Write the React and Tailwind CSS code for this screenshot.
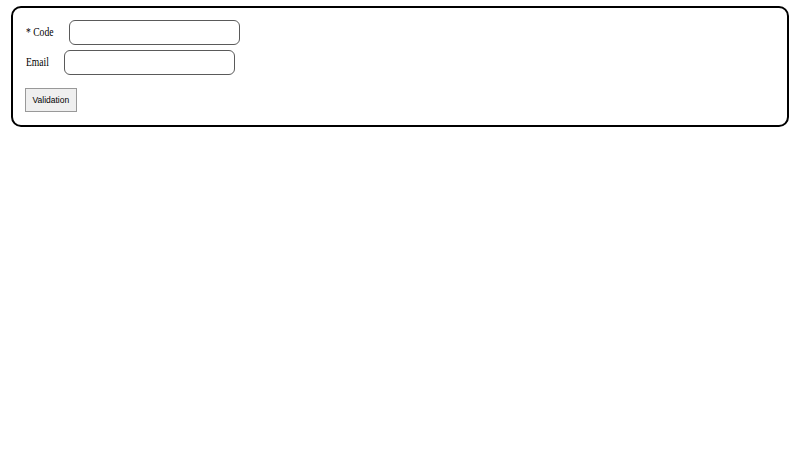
export default function App() {
  return (
    <div className="bg-white w-[800px] h-[450px] pt-[6px] px-[11px]">
      <div className="border-2 border-black rounded-[10px] px-[13px] pt-[11px] pb-[13px] flex flex-col">
        <div className="flex items-center h-[26px]">
          <span className="inline-block text-[12px] text-black mr-[9px] scale-x-80 origin-left" style={{ fontFamily: '"Liberation Serif", serif' }}>* Code</span>
          <input className="w-[171px] h-[25px] border-[1.5px] border-[#5a5a5a] rounded-[6px] bg-white outline-none" />
        </div>
        <div className="flex items-center h-[26px] mt-[4px]">
          <span className="inline-block text-[12px] text-black mr-[9px] scale-x-80 origin-left" style={{ fontFamily: '"Liberation Serif", serif' }}>Email</span>
          <input className="w-[171px] h-[25px] border-[1.5px] border-[#5a5a5a] rounded-[6px] bg-white outline-none" />
        </div>
        <div className="mt-[10px] -ml-px">
          <button className="h-[24px] px-[6.5px] bg-[#efefef] border border-[#999] text-[8.5px] text-black" style={{ fontFamily: '"Liberation Sans", sans-serif' }}>Validation</button>
        </div>
      </div>
    </div>
  );
}
